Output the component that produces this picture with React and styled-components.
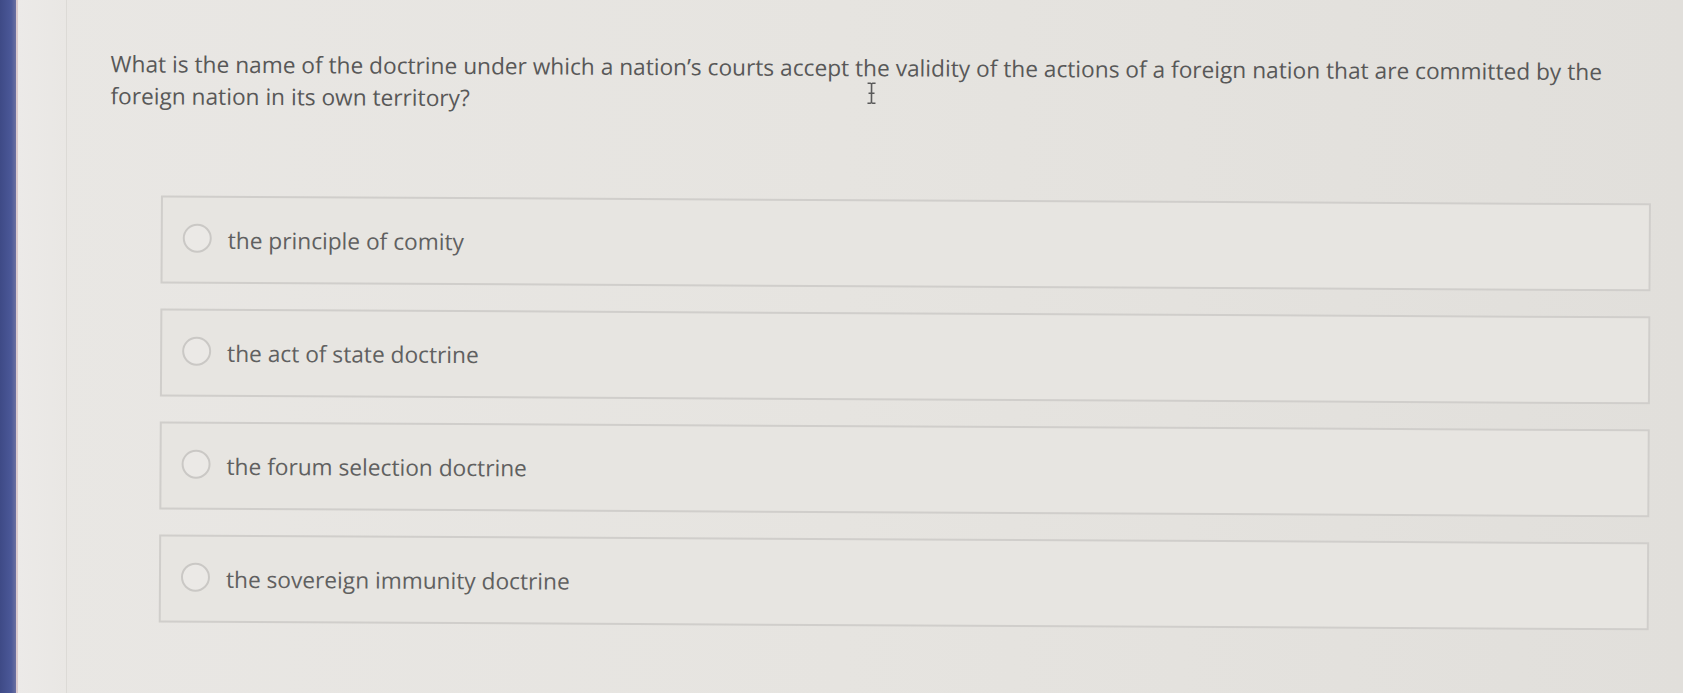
import React from "react";
import styled, { createGlobalStyle } from "styled-components";

const Global = createGlobalStyle`
  html, body { margin: 0; padding: 0; }
  body {
    background: #e4e2de;
    font-family: "Open Sans", "Noto Sans", sans-serif;
    overflow: hidden;
  }
`;

const Page = styled.div`
  display: flex;
  width: 1683px;
  height: 693px;
  background: linear-gradient(90deg, #e9e7e4 0%, #e6e4e0 50%, #e1dfdb 100%);
`;

const BlueBar = styled.div`
  width: 16px;
  flex: none;
  background: linear-gradient(90deg, #3e4a86 0%, #4b5898 70%, #6a6fa0 100%);
  border-right: 2px solid #d9c9cc;
`;

const SideStrip = styled.div`
  width: 48px;
  flex: none;
  background: linear-gradient(90deg, #eceae8, #e9e7e4);
  border-right: 1px solid #dcdad6;
`;

const Main = styled.main`
  position: relative;
  flex: 1;
  padding: 48px 31px 0 44px;
  transform: rotate(0.3deg);
  transform-origin: 0 0;
`;

const Question = styled.p`
  margin: 0;
  font-size: 22.7px;
  line-height: 32px;
  color: #585858;
  max-width: 1500px;
`;

const Options = styled.div`
  display: flex;
  flex-direction: column;
  gap: 25px;
  margin: 83px 0 0 51px;
`;

const OptionBox = styled.label`
  display: flex;
  align-items: center;
  gap: 16px;
  height: 88px;
  box-sizing: border-box;
  padding: 0 0 0 20px;
  border: 2px solid #d0cecb;
  background: #e7e5e1;
`;

const Radio = styled.span`
  width: 29px;
  height: 29px;
  flex: none;
  box-sizing: border-box;
  border-radius: 50%;
  border: 2px solid #cac8c5;
  background: #ebe9e6;
  margin-top: -4px;
`;

const OptionText = styled.span`
  font-size: 22.7px;
  color: #606060;
`;

const Cursor = styled.svg`
  position: absolute;
  left: 798px;
  top: 77px;
  width: 14px;
  height: 24px;
`;

const options = [
  "the principle of comity",
  "the act of state doctrine",
  "the forum selection doctrine",
  "the sovereign immunity doctrine",
];

export default function App() {
  return (
    <>
      <Global />
      <Page>
        <BlueBar />
        <SideStrip />
        <Main>
          <Question>
            What is the name of the doctrine under which a nation’s courts accept the validity of the actions of a
            foreign nation that are committed by the foreign nation in its own territory?
          </Question>
          <Cursor viewBox="0 0 14 24">
            <path
              d="M3 2 H6 Q7 2 7 4 V20 Q7 22 6 22 H3 M11 2 H8 Q7 2 7 4 M7 20 Q7 22 8 22 H11 M4 12 H10"
              fill="none"
              stroke="#5a5a5a"
              strokeWidth="1.6"
            />
          </Cursor>
          <Options>
            {options.map((o) => (
              <OptionBox key={o}>
                <Radio />
                <OptionText>{o}</OptionText>
              </OptionBox>
            ))}
          </Options>
        </Main>
      </Page>
    </>
  );
}
